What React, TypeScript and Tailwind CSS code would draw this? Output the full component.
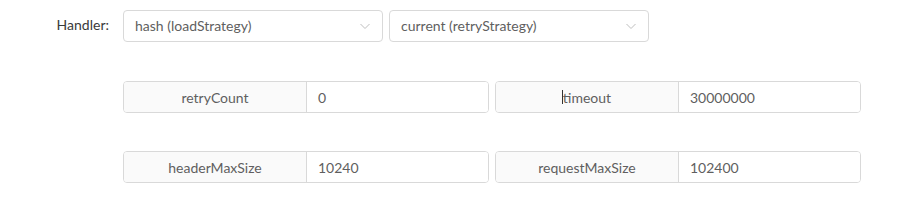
import React from "react";

function Chevron() {
  return (
    <svg width="12" height="12" viewBox="0 0 12 12" className="shrink-0">
      <path d="M1.5 4 L6 8.5 L10.5 4" fill="none" stroke="#bfbfbf" strokeWidth="1" />
    </svg>
  );
}

function Select({ text }: { text: string }) {
  return (
    <div className="w-[260px] h-[32px] border border-[#d9d9d9] rounded-[4px] bg-white flex items-center pl-[11px] pr-[11px]">
      <span className="flex-1 text-[14px] text-[#5f5f5f] leading-[22px]">{text}</span>
      <Chevron />
    </div>
  );
}

function Group({ label, value, caret }: { label: string; value: string; caret?: boolean }) {
  return (
    <div className="w-[366px] h-[32px] flex border border-[#d9d9d9] rounded-[4px] overflow-hidden">
      <div className="w-[183px] h-full bg-[#fafafa] border-r border-[#d9d9d9] flex items-center justify-center text-[14px] text-[#5f5f5f]">
        <span className="relative">
          {caret && <span className="absolute left-[-1px] top-[3px] w-[1px] h-[14px] bg-[#333]" />}
          {label}
        </span>
      </div>
      <div className="flex-1 h-full bg-white flex items-center pl-[11px] text-[14px] text-[#5f5f5f]">{value}</div>
    </div>
  );
}

export default function App() {
  return (
    <div
      className="w-[908px] h-[211px] bg-white pt-[10px]"
      style={{ fontFamily: 'Lato, "Noto Sans CJK SC", sans-serif' }}
    >
      <div className="flex">
        <div className="w-[123px] pr-[14px] text-right text-[14px] text-[#3a3a3a] leading-[22px] pt-[4px]">
          Handler:
        </div>
        <div className="flex gap-[6px]">
          <Select text="hash (loadStrategy)" />
          <Select text="current (retryStrategy)" />
        </div>
      </div>
      <div className="ml-[123px] mt-[39px] flex gap-[6px]">
        <Group label="retryCount" value="0" />
        <Group label="timeout" value="30000000" caret />
      </div>
      <div className="ml-[123px] mt-[38px] flex gap-[6px]">
        <Group label="headerMaxSize" value="10240" />
        <Group label="requestMaxSize" value="102400" />
      </div>
    </div>
  );
}
